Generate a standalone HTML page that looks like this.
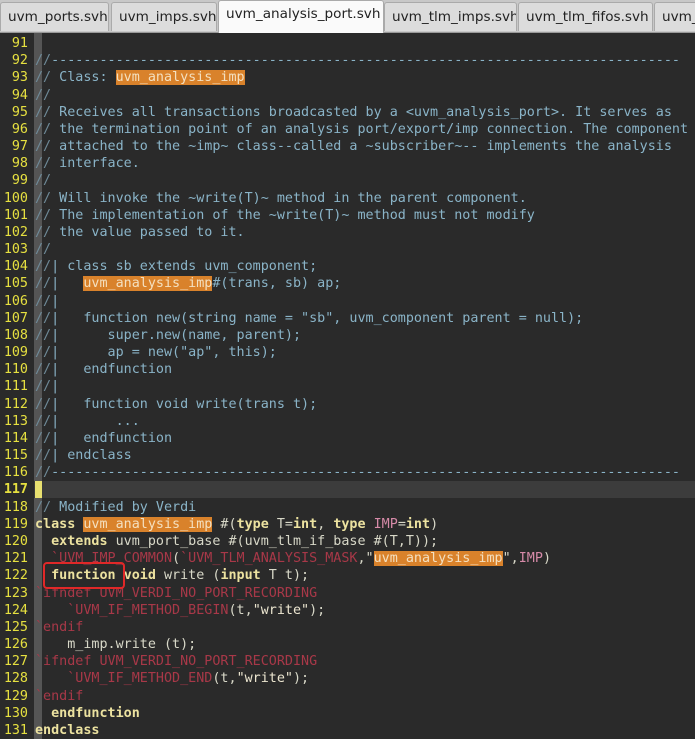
<!DOCTYPE html>
<html><head><meta charset="utf-8"><style>
*{margin:0;padding:0;box-sizing:border-box}
body{width:695px;height:739px;overflow:hidden;background:#2a2a2a;position:relative;font-family:"DejaVu Sans Mono","Liberation Mono",monospace}
.tabs{position:absolute;left:0;top:0;width:695px;height:33px;background:#c8c8c8;border-bottom:1px solid #999}
.tab{position:absolute;top:2px;height:29px;background:#dcdcdc;border:1px solid #aaa;border-bottom:none;border-radius:3px 3px 0 0;font-family:"DejaVu Sans","Liberation Sans",sans-serif;font-size:13.6px;color:#222;padding:6px 0 0 7px;white-space:nowrap;overflow:hidden}
.tab.act{background:#fafafa;top:0;height:33px;padding-top:5px}
.gut{position:absolute;left:0;top:33px;width:34px;height:706px;background:#2a2a2a}
.bar{position:absolute;left:34px;top:33px;width:8px;height:706px;background:#555}
.cur{position:absolute;left:34px;width:661px;height:17px;background:#3c3c3c}
.curb{position:absolute;left:35px;width:7px;height:17px;background:#e8e070}
.ln{position:absolute;left:0;width:28px;text-align:right;color:#e6e040;font-size:13.4px;line-height:17.17px}
.code{position:absolute;left:35px;white-space:pre;font-size:13.4px;line-height:17.17px;color:#d8d8c8}
.c{color:#8ab4c8}.cs{color:#6f8a98}
.h{background:#d9822b;color:#f4e0c0}
.k{color:#ece2a0;font-weight:bold}
.m{color:#a83848}
.p{color:#d68aa8}
.s{color:#ece6d0}
.box{position:absolute;left:43px;top:562px;width:82px;height:27px;border:2px solid #e02828;border-radius:4px}
</style></head><body>
<div class="tabs">
<div class="tab" style="left:0;width:109px">uvm_ports.svh</div>
<div class="tab" style="left:111px;width:106px">uvm_imps.svh</div>
<div class="tab act" style="left:218px;width:166px">uvm_analysis_port.svh</div>
<div class="tab" style="left:384px;width:133px">uvm_tlm_imps.svh</div>
<div class="tab" style="left:518px;width:135px">uvm_tlm_fifos.svh</div>
<div class="tab" style="left:654px;width:50px">uvm_</div>
</div>
<div class="gut"></div>
<div class="bar"></div>
<div class="cur" style="top:481px"></div>
<div class="curb" style="top:481px"></div>
<div class="ln" style="top:35px">91<br>92<br>93<br>94<br>95<br>96<br>97<br>98<br>99<br>100<br>101<br>102<br>103<br>104<br>105<br>106<br>107<br>108<br>109<br>110<br>111<br>112<br>113<br>114<br>115<br>116<br><b>117</b><br>118<br>119<br>120<br>121<br>122<br>123<br>124<br>125<br>126<br>127<br>128<br>129<br>130<br>131</div>
<div class="code" style="top:35px">
<span class="c"><span class="cs">//</span>------------------------------------------------------------------------------</span>
<span class="c"><span class="cs">//</span> Class: <span class="h">uvm_analysis_imp</span></span>
<span class="c"><span class="cs">//</span></span>
<span class="c"><span class="cs">//</span> Receives all transactions broadcasted by a &lt;uvm_analysis_port&gt;. It serves as</span>
<span class="c"><span class="cs">//</span> the termination point of an analysis port/export/imp connection. The component</span>
<span class="c"><span class="cs">//</span> attached to the ~imp~ class--called a ~subscriber~-- implements the analysis</span>
<span class="c"><span class="cs">//</span> interface.</span>
<span class="c"><span class="cs">//</span></span>
<span class="c"><span class="cs">//</span> Will invoke the ~write(T)~ method in the parent component.</span>
<span class="c"><span class="cs">//</span> The implementation of the ~write(T)~ method must not modify</span>
<span class="c"><span class="cs">//</span> the value passed to it.</span>
<span class="c"><span class="cs">//</span></span>
<span class="c"><span class="cs">//</span>| class sb extends uvm_component;</span>
<span class="c"><span class="cs">//</span>|   <span class="h">uvm_analysis_imp</span>#(trans, sb) ap;</span>
<span class="c"><span class="cs">//</span>|</span>
<span class="c"><span class="cs">//</span>|   function new(string name = "sb", uvm_component parent = null);</span>
<span class="c"><span class="cs">//</span>|      super.new(name, parent);</span>
<span class="c"><span class="cs">//</span>|      ap = new("ap", this);</span>
<span class="c"><span class="cs">//</span>|   endfunction</span>
<span class="c"><span class="cs">//</span>|</span>
<span class="c"><span class="cs">//</span>|   function void write(trans t);</span>
<span class="c"><span class="cs">//</span>|       ...</span>
<span class="c"><span class="cs">//</span>|   endfunction</span>
<span class="c"><span class="cs">//</span>| endclass</span>
<span class="c"><span class="cs">//</span>------------------------------------------------------------------------------</span>

<span class="c"><span class="cs">//</span> Modified by Verdi</span>
<span class="k">class</span> <span class="h">uvm_analysis_imp</span> #(<span class="k">type</span> T=<span class="k">int</span>, <span class="k">type</span> <span class="p">IMP</span>=<span class="k">int</span>)
  <span class="k">extends</span> uvm_port_base #(uvm_tlm_if_base #(T,T));
  <span class="m">`UVM_IMP_COMMON</span>(<span class="m">`UVM_TLM_ANALYSIS_MASK</span>,"<span class="h">uvm_analysis_imp</span>",<span class="p">IMP</span>)
  <span class="k">function</span> <span class="k">void</span> write (<span class="k">input</span> T t);
<span class="m">`ifndef UVM_VERDI_NO_PORT_RECORDING</span>
    <span class="m">`UVM_IF_METHOD_BEGIN</span>(t,<span class="s">"write"</span>);
<span class="m">`endif</span>
    m_imp.write (t);
<span class="m">`ifndef UVM_VERDI_NO_PORT_RECORDING</span>
    <span class="m">`UVM_IF_METHOD_END</span>(t,<span class="s">"write"</span>);
<span class="m">`endif</span>
  <span class="k">endfunction</span>
<span class="k">endclass</span>
</div>
<div class="box"></div>
</body></html>
